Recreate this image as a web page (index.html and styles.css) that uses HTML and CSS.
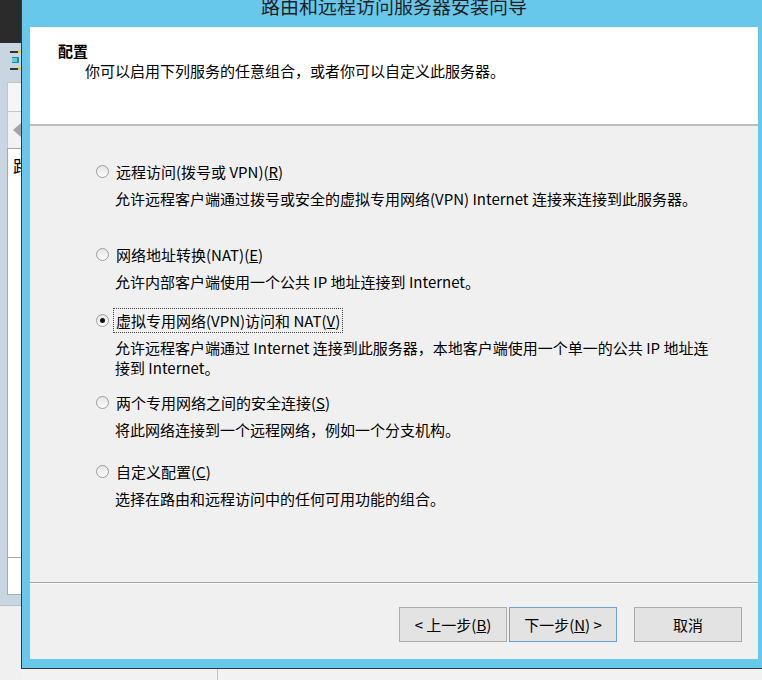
FILE: index.html
```html
<!DOCTYPE html>
<html lang="zh-CN">
<head>
    <meta charset="UTF-8">
    <meta name="viewport" content="width=device-width, initial-scale=1.0">
    <title>路由和远程访问服务器安装向导</title>
    <link rel="stylesheet" href="styles.css">
</head>
<body>
    <div class="screen">
        <!-- MMC console peeking out behind the wizard -->
        <div class="mmc">
            <div class="mmc-caption"></div>
            <div class="mmc-menu">
                <svg width="11" height="24" viewBox="0 0 11 24">
                    <rect x="0" y="2" width="9" height="2" fill="#333"/>
                    <rect x="8" y="1" width="3" height="3" fill="#e8d13a"/>
                    <rect x="2" y="8" width="7" height="6" fill="#1f8fa0"/>
                    <rect x="2" y="9" width="5" height="4" fill="#5fd0d8"/>
                    <rect x="0" y="19" width="9" height="2" fill="#333"/>
                    <rect x="8" y="18" width="3" height="3" fill="#e8d13a"/>
                </svg>
            </div>
            <div class="mmc-bar"></div>
            <div class="mmc-nav">
                <svg width="9" height="16" viewBox="0 0 9 16">
                    <polygon points="9,0 0,8 9,16" fill="#a4a4a4"/>
                </svg>
            </div>
            <div class="mmc-tree">路由和远程访问</div>
            <div class="mmc-status"></div>
        </div>

        <div class="stage">
            <div class="dialog">
                <div class="titlebar">路由和远程访问服务器安装向导</div>
                <div class="client">
                    <div class="wizard-header">
                        <div class="wizard-title">配置</div>
                        <div class="wizard-subtitle">你可以启用下列服务的任意组合，或者你可以自定义此服务器。</div>
                    </div>

                    <div class="wizard-body">
                        <div class="option">
                            <label class="option-row">
                                <input type="radio" name="config">
                                <span class="option-label">远程访问(拨号或 VPN)(<u>R</u>)</span>
                            </label>
                            <div class="option-desc">允许远程客户端通过拨号或安全的虚拟专用网络(VPN) Internet 连接来连接到此服务器。</div>
                        </div>
                        <div class="option">
                            <label class="option-row">
                                <input type="radio" name="config">
                                <span class="option-label">网络地址转换(NAT)(<u>E</u>)</span>
                            </label>
                            <div class="option-desc">允许内部客户端使用一个公共 IP 地址连接到 Internet。</div>
                        </div>
                        <div class="option">
                            <label class="option-row">
                                <input type="radio" name="config" checked>
                                <span class="option-label focused">虚拟专用网络(VPN)访问和 NAT(<u>V</u>)</span>
                            </label>
                            <div class="option-desc">允许远程客户端通过 Internet 连接到此服务器，本地客户端使用一个单一的公共 IP 地址连接到 Internet。</div>
                        </div>
                        <div class="option">
                            <label class="option-row">
                                <input type="radio" name="config">
                                <span class="option-label">两个专用网络之间的安全连接(<u>S</u>)</span>
                            </label>
                            <div class="option-desc">将此网络连接到一个远程网络，例如一个分支机构。</div>
                        </div>
                        <div class="option">
                            <label class="option-row">
                                <input type="radio" name="config">
                                <span class="option-label">自定义配置(<u>C</u>)</span>
                            </label>
                            <div class="option-desc">选择在路由和远程访问中的任何可用功能的组合。</div>
                        </div>
                    </div>

                    <div class="wizard-footer">
                        <button class="btn btn-back">&lt; 上一步(<u>B</u>)</button>
                        <button class="btn btn-default">下一步(<u>N</u>) &gt;</button>
                        <button class="btn">取消</button>
                    </div>
                </div>
            </div>
            <div class="below">
                <div class="below-split"></div>
            </div>
        </div>
    </div>
</body>
</html>
```

FILE: styles.css
```css
body {
    margin: 0;
    font-family: "Noto Sans CJK SC", "Microsoft YaHei UI", sans-serif;
    font-size: 15px;
    color: #000;
    background-color: #f0f0f0;
}
.screen {
    display: flex;
    width: 762px;
    height: 680px;
    overflow: hidden;
}

/* console window behind */
.mmc {
    flex: 0 0 21px;
    height: 605px;
    display: flex;
    flex-direction: column;
    background-color: #c9d5e0;
    border-bottom: 1px solid #b5bfc8;
    overflow: hidden;
}
.mmc-caption {
    height: 43px;
    background-color: #2b2b2b;
}
.mmc-menu {
    height: 39px;
    padding: 6px 0 0 10px;
    box-sizing: border-box;
}
.mmc-bar {
    height: 30px;
    margin-left: 7px;
    background-color: #f6f6f6;
    border: 1px solid #c6c6c6;
    border-right: none;
    box-sizing: border-box;
}
.mmc-nav {
    height: 36px;
    margin-left: 7px;
    padding: 9px 0 0 5px;
    background-color: #f2f2f2;
    border-left: 1px solid #c6c6c6;
    box-sizing: border-box;
}
.mmc-tree {
    height: 410px;
    margin-left: 7px;
    padding: 4px 0 0 5px;
    background-color: #fff;
    border: 1px solid #a9a9a9;
    border-right: none;
    box-sizing: border-box;
    white-space: nowrap;
    font-size: 17px;
    color: #000;
}
.mmc-status {
    height: 37px;
    margin-left: 7px;
    background-color: #fff;
    border: 1px solid #a9a9a9;
    border-top: none;
    border-right: none;
    box-sizing: border-box;
}

/* wizard window */
.stage {
    flex: 1;
    display: flex;
    flex-direction: column;
}
.dialog {
    height: 669px;
    box-sizing: border-box;
    padding: 0 4px 9px 8px;
    background-color: #67c8eb;
    border-left: 1px solid #2f3b44;
    border-bottom: 1px solid #2f3b44;
}
.titlebar {
    height: 27px;
    line-height: 12px;
    font-size: 19px;
    text-align: center;
    color: #1f1f1f;
    overflow: hidden;
}
.client {
    height: 632px;
    display: flex;
    flex-direction: column;
    background-color: #f0f0f0;
}
.wizard-header {
    height: 99px;
    box-sizing: border-box;
    padding: 14px 0 0 28px;
    background-color: #fff;
    border-bottom: 2px solid #bcbcbc;
    line-height: 20px;
}
.wizard-title {
    font-weight: bold;
}
.wizard-subtitle {
    padding-left: 27px;
}

.wizard-body {
    flex: 1;
    padding: 35px 0 0 66px;
}
.option-row {
    display: flex;
    align-items: center;
    height: 20px;
    line-height: 20px;
}
.option-row input {
    appearance: none;
    width: 13px;
    height: 13px;
    margin: 0 7px 0 0;
    border: 1px solid #9d9d9d;
    border-radius: 50%;
    box-sizing: border-box;
    background: linear-gradient(#e6e6e6, #fcfcfc);
    display: flex;
    align-items: center;
    justify-content: center;
}
.option-row input:checked::after {
    content: "";
    width: 5px;
    height: 5px;
    border-radius: 50%;
    background-color: #111;
}
.option-label {
    line-height: 23px;
    padding: 0 2px;
    margin-left: -3px;
    border: 1px dotted transparent;
}
.option-label.focused {
    border-color: #444;
}
.option-desc {
    margin: 8px 0 0 19px;
    width: 606px;
    line-height: 20px;
}
.option:nth-child(1) { margin-bottom: 35px; }
.option:nth-child(2) { margin-bottom: 18px; }
.option:nth-child(3) { margin-bottom: 14px; }
.option:nth-child(4) { margin-bottom: 21px; }

.wizard-footer {
    height: 77px;
    box-sizing: border-box;
    display: flex;
    justify-content: flex-end;
    align-items: flex-start;
    padding: 24px 16px 0 0;
    border-top: 1px solid #a6a6a6;
    box-shadow: inset 0 1px #fafafa;
}
.btn {
    width: 108px;
    height: 35px;
    padding: 0;
    font-family: inherit;
    font-size: 15px;
    color: #000;
    background-color: #e3e3e3;
    border: 1px solid #acacac;
}
.btn-back {
    margin-right: 2px;
}
.btn-default {
    margin-right: 17px;
    border-color: #6f9fd6;
}

.below {
    flex: 1;
    background-color: #f2f2f2;
}
.below-split {
    height: 100%;
    margin-left: 196px;
    width: 1px;
    background-color: #c4c4c4;
}
```
